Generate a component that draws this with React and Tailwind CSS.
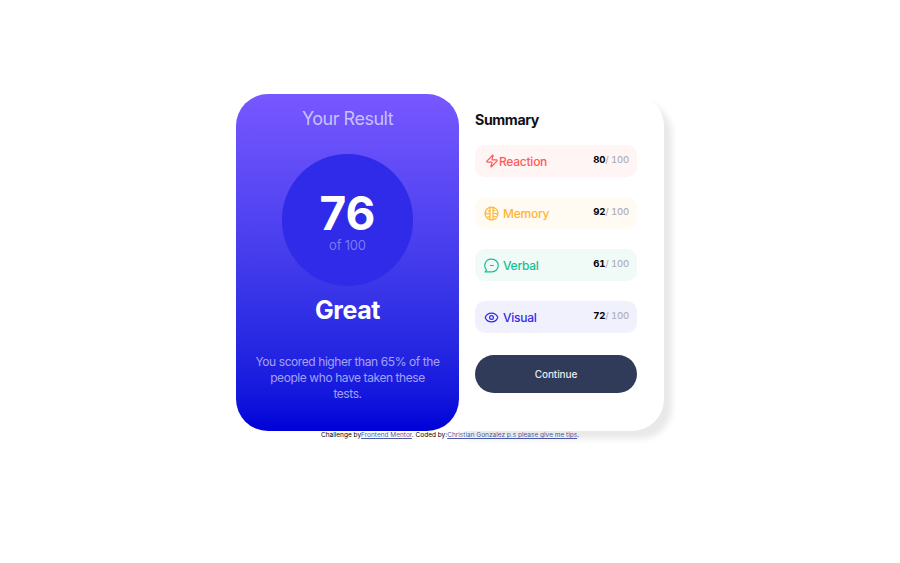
import React from "react";
import { Eye, Zap } from "lucide-react";

const BrainIcon = ({ className }) => (
  <svg viewBox="0 0 20 20" fill="none" stroke="currentColor" strokeWidth="1.6" strokeLinecap="round" strokeLinejoin="round" className={className}>
    <circle cx="10" cy="10" r="8.6" />
    <path d="M8 1.8v16.4M12 1.8v16.4M8 6.5H5.5M8 10.5H3.5L2 9M8 14.5H5M12 6H14.5M12 10h4.5L18 11.5M12 14h3" />
  </svg>
);

const ChatIcon = ({ className }) => (
  <svg viewBox="0 0 20 20" fill="none" stroke="currentColor" strokeWidth="1.6" strokeLinecap="round" strokeLinejoin="round" className={className}>
    <path d="M10.5 1.5a8.5 8.5 0 0 1 0 17H1.5l2-2.6A8.5 8.5 0 0 1 10.5 1.5Z" />
    <path d="M8.5 10h4" />
  </svg>
);

const scores = [
  { name: "Reaction", score: 80, rowClass: "bg-[#fff5f5]", textClass: "text-[#ff5a5a]", gap: "gap-0", iconClass: "w-[14px] h-[18px] ml-[1px]", Icon: Zap },
  { name: "Memory", score: 92, rowClass: "bg-[#fffbf2]", textClass: "text-[#ffb533]", gap: "gap-[4px]", iconClass: "w-[15px] h-[15px]", Icon: BrainIcon },
  { name: "Verbal", score: 61, rowClass: "bg-[#f0fbf8]", textClass: "text-[#15bf95]", gap: "gap-[4px]", iconClass: "w-[15px] h-[15px]", Icon: ChatIcon },
  { name: "Visual", score: 72, rowClass: "bg-[#f1f1fe]", textClass: "text-[#2e2be9]", gap: "gap-[4px]", iconClass: "w-[15px] h-[15px]", Icon: Eye },
];

const ScoreRow = ({ item }) => {
  const { Icon } = item;
  return (
    <div className={`flex h-8 items-center justify-between rounded-[10px] pl-[9px] pr-2 ${item.rowClass}`}>
      <div className={`flex items-center text-[12px] font-medium tracking-[-0.25px] ${item.gap} ${item.textClass}`}>
        <Icon className={item.iconClass} />
        <span className="mt-px">{item.name}</span>
      </div>
      <p className="-mt-px text-[9.6px] font-bold tracking-[-0.2px] text-black tabular-nums">
        {item.score}
        <span className="font-medium text-[#b0b0b8]">/ 100</span>
      </p>
    </div>
  );
};

const App = () => {
  return (
    <div className="flex min-h-[563px] flex-col items-center bg-white pt-[94px] font-['Inter','Noto_Sans',sans-serif]">
      <main className="flex h-[337px] w-[428px]">
        <section className="flex w-[223px] flex-col items-center rounded-[32px] bg-gradient-to-b from-[#7857ff] to-[#0000d8] pt-[13px] text-center">
          <h2 className="text-[18px] leading-6 font-normal tracking-[-0.5px] text-[#c8c0ff]">Your Result</h2>
          <div className="mt-[23px] flex h-[132px] w-[131px] flex-col items-center justify-center rounded-full bg-[#2f2be8] pt-1">
            <p className="text-[46px] leading-[44px] font-bold text-white">76</p>
            <p className="mt-[2px] text-[13px] leading-4 tracking-[-0.2px] text-[#7e79f2]">of 100</p>
          </div>
          <h1 className="mt-[8px] text-[25px] leading-8 font-bold tracking-[-0.4px] text-white">Great</h1>
          <p className="mt-[28px] w-[200px] text-[12px] leading-4 tracking-[-0.42px] text-[#a5a2f5]">
            You scored higher than 65% of the
            <br />
            people who have taken these
            <br />
            tests.
          </p>
        </section>

        <section className="flex flex-1 flex-col rounded-r-[32px] bg-white pt-[16px] pr-[27px] pl-4 shadow-[8px_8px_6px_rgba(0,0,0,0.09)]">
          <h2 className="text-[14.2px] leading-5 font-bold tracking-[-0.4px] text-[#101018]">Summary</h2>
          <div className="mt-[15px] flex flex-col gap-5">
            {scores.map((item) => (
              <ScoreRow key={item.name} item={item} />
            ))}
          </div>
          <button type="button" className="mt-[22px] h-[38px] rounded-full bg-[#303b5a] text-[10px] font-medium tracking-[-0.1px] text-[#e8e9f0]">
            Continue
          </button>
        </section>
      </main>

      <footer className="text-center text-[6.5px] leading-[9px] text-black">
        Challenge by
        <a href="#" className="text-[#4a58a8] underline">Frontend Mentor</a>
        . Coded by:
        <a href="#" className="text-[#4a58a8] underline">Christian Gonzalez p.s please give me tips</a>
        .
      </footer>
    </div>
  );
};

export default App;
